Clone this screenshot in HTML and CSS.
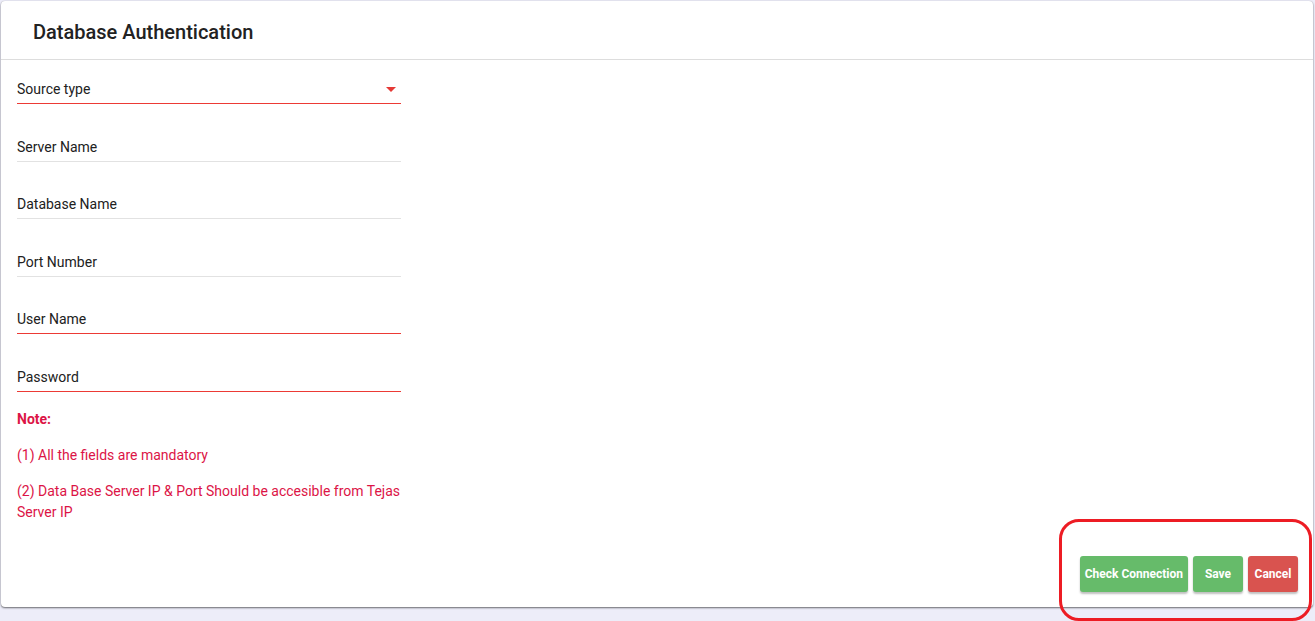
FILE: index.html
```html
<!DOCTYPE html>
<html lang="en">
<head>
    <meta charset="UTF-8">
    <meta name="viewport" content="width=device-width, initial-scale=1.0">
    <title>Database Authentication</title>
    <link rel="stylesheet" href="styles.css">
</head>
<body>
    <div class="card">
        <div class="card-header">
            <h1>Database Authentication</h1>
        </div>
        <div class="card-body">
            <form class="auth-form">
                <div class="field field-select invalid">
                    <span class="field-label">Source type</span>
                    <span class="caret"></span>
                </div>
                <div class="field">
                    <span class="field-label">Server Name</span>
                </div>
                <div class="field">
                    <span class="field-label">Database Name</span>
                </div>
                <div class="field">
                    <span class="field-label">Port Number</span>
                </div>
                <div class="field invalid">
                    <span class="field-label">User Name</span>
                </div>
                <div class="field invalid">
                    <span class="field-label">Password</span>
                </div>
                <div class="note">
                    <p class="note-title">Note:</p>
                    <p>(1) All the fields are mandatory</p>
                    <p>(2) Data Base Server IP &amp; Port Should be accesible from Tejas Server IP</p>
                </div>
            </form>
        </div>
        <div class="card-footer">
            <button class="btn btn-success">Check Connection</button>
            <button class="btn btn-success">Save</button>
            <button class="btn btn-danger">Cancel</button>
        </div>
    </div>
    <div class="highlight"></div>
</body>
</html>
```

FILE: styles.css
```css
html, body {
    margin: 0;
    height: 100%;
}

body {
    font-family: Roboto, "Liberation Sans", Arial, sans-serif;
    background-color: #ededf9;
    color: #212121;
    padding: 1px 2px 0 1px;
    box-sizing: border-box;
    overflow: hidden;
}

.card {
    height: 606px;
    background-color: #fff;
    border-radius: 4px;
    box-shadow: 0 1px 2px rgba(0, 0, 0, 0.55), 0 0 1px rgba(0, 0, 0, 0.2);
    display: flex;
    flex-direction: column;
}

.card-header {
    height: 54px;
    padding: 4px 0 0 32px;
    border-bottom: 1px solid #ddd;
    display: flex;
    align-items: center;
}

.card-header h1 {
    margin: 0;
    font-size: 20px;
    font-weight: 500;
    color: #222;
}

.card-body {
    flex: 1;
    padding: 0 16px;
}

.auth-form {
    width: 384px;
    padding-top: 19px;
}

.field {
    position: relative;
    height: 24px;
    line-height: 20px;
    font-size: 14px;
    border-bottom: 1px solid #e2e2e2;
    margin-bottom: 32.5px;
}

.field.invalid {
    border-bottom: 1px solid #ec3a35;
}

.caret {
    position: absolute;
    right: 5px;
    top: 8px;
    width: 0;
    height: 0;
    border-left: 5px solid transparent;
    border-right: 5px solid transparent;
    border-top: 5px solid #e53935;
}

.note {
    margin-top: -15px;
    font-size: 14px;
    line-height: 21px;
    color: #dc1446;
}

.note p {
    margin: 0 0 15px;
}

.note .note-title {
    font-weight: 700;
}

.card-footer {
    display: flex;
    justify-content: flex-end;
    gap: 5px;
    padding: 0 15px 15px;
}

.btn {
    height: 36px;
    min-width: 50px;
    padding: 0 5px;
    border: none;
    border-radius: 3px;
    color: #fff;
    font-family: Roboto, "Liberation Sans", Arial, sans-serif;
    font-size: 12px;
    font-weight: 700;
    box-shadow: 0 2px 2px rgba(0, 0, 0, 0.25);
    cursor: pointer;
}

.btn-success {
    background-color: #66bb6a;
}

.btn-danger {
    background-color: #d9534f;
}

.highlight {
    position: absolute;
    left: 1059px;
    top: 519px;
    width: 247px;
    height: 96px;
    border: 3px solid #ed1c24;
    border-radius: 20px;
}
```
